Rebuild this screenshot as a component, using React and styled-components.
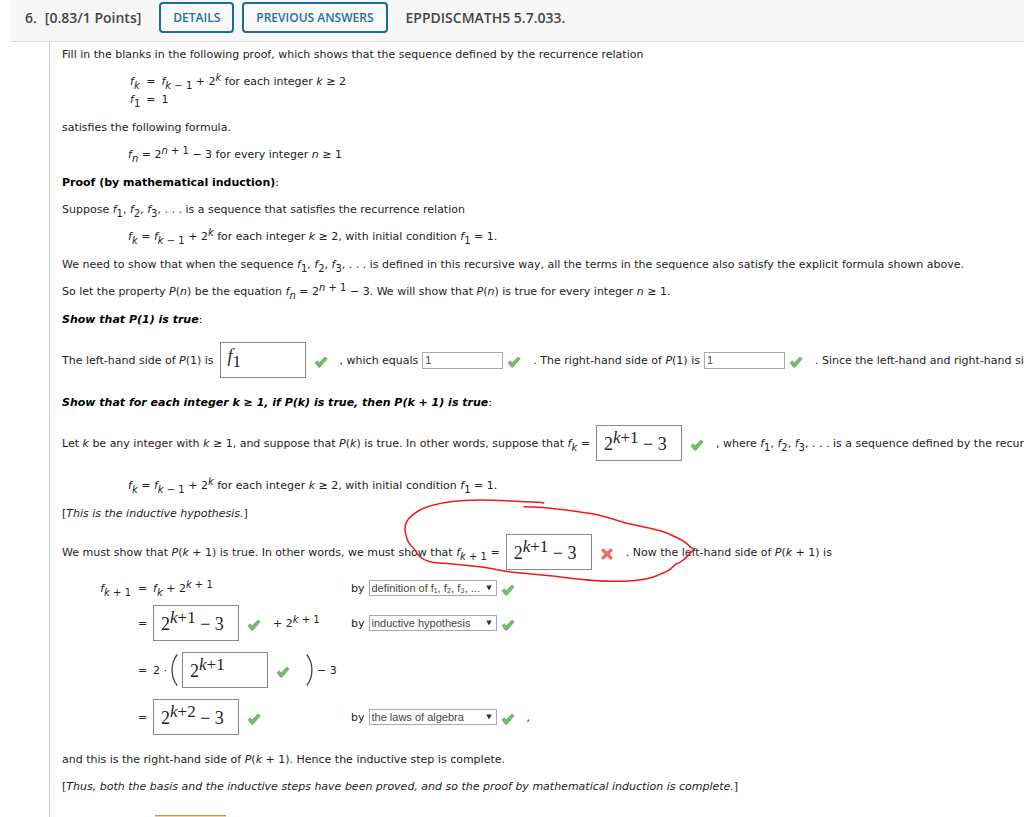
import * as React from "react";
import styled, { createGlobalStyle, css } from "styled-components";

const GlobalStyle = createGlobalStyle`
  * {
    box-sizing: border-box;
  }

  body {
    margin: 0;
    background-color: white;
    color: #222;
    font-family: "DejaVu Sans", Verdana, sans-serif;
    font-size: 11px;
    line-height: 17px;
  }
`;

const StyleQuestion = styled.main`
  padding-left: 11px;
  overflow: hidden;
`;

const StyleHeader = styled.header`
  display: flex;
  align-items: center;
  height: 42px;
  padding: 0 14px 7px;
  background-color: #f7f7f7;
  border-bottom: 1px solid #ddd;
  color: #444;
  font-family: "Open Sans", sans-serif;
  font-size: 14px;
  font-weight: 600;
  white-space: nowrap;

  h1,
  h2 {
    margin: 0;
    font-size: inherit;
    font-weight: inherit;
  }

  h2 {
    margin-left: 8px;
  }

  .code {
    margin-left: 18px;
  }
`;

const StyleHeaderButton = styled.button`
  height: 31px;
  margin-left: ${({ $first }) => ($first ? "18px" : "8px")};
  padding: 0 12px;
  background-color: #f9f9f9;
  border: 2px solid #1a6c9f;
  border-radius: 4px;
  color: #1f6fa3;
  font-family: inherit;
  font-size: 12px;
  font-weight: 600;
  cursor: pointer;
`;

const StyleBody = styled.section`
  display: flex;
  flex-flow: column nowrap;
  gap: 10px;
  margin-left: 38px;
  padding: 4px 0 0 12px;
  border-left: 1px solid #ccc;
  white-space: nowrap;

  sub,
  sup {
    font-size: 10px;
    line-height: 0;
  }

  sub {
    vertical-align: -4px;
  }

  sup {
    vertical-align: 4px;
  }
`;

const StyleLine = styled.p`
  margin: 0;
  line-height: ${({ $tall }) => ($tall ? "18px" : "17px")};
`;

const StyleFormula = styled.div`
  padding-left: 66px;
  line-height: 18px;
`;

const StyleDefinition = styled.div`
  display: grid;
  grid-template-columns: auto auto 1fr;
  column-gap: 6px;
  padding-left: 68px;
  line-height: 18px;
`;

const StyleHeading = styled.h3`
  margin: 0;
  color: #000;
  font-size: inherit;
  font-weight: 700;
  font-style: ${({ $italic }) => ($italic ? "italic" : "normal")};

  span {
    font-weight: 400;
    font-style: normal;
  }
`;

const StyleAnswerRow = styled.div`
  position: relative;
  display: flex;
  align-items: center;
  height: ${({ $dense }) => ($dense ? "40px" : "44px")};
  margin-bottom: ${({ $dense }) => ($dense ? "-10px" : "2px")};

  > * {
    flex: none;
  }
`;

const answerBorder = css`
  background-color: white;
  border: 1px solid #aaa;
  border-radius: 0;
  color: #444;
`;

const StyleMathBox = styled.div`
  ${answerBorder}
  flex: none;
  width: 86px;
  height: 36px;
  margin-left: ${({ $flush }) => ($flush ? "0" : "6px")};
  padding: 0 7px;
  border-color: #888;
  color: #222;
  font-family: "Liberation Serif", serif;
  font-size: 18px;
  line-height: ${({ $raised }) => ($raised ? "26px" : "36px")};

  sub,
  sup {
    font-size: 17px;
  }

  sup {
    vertical-align: 7px;
  }

  sub {
    vertical-align: -5px;
  }
`;

const StyleInput = styled.input`
  ${answerBorder}
  width: 81px;
  height: 17px;
  margin-left: 4px;
  padding: 0 2px;
  font-family: "Liberation Sans", Arial, sans-serif;
  font-size: 11px;
`;

const StyleMark = styled.svg`
  flex: none;
  width: 14px;
  height: 14px;
  margin: 4px 12px 0 ${({ $near }) => ($near ? "4px" : "8px")};
`;

const StyleSteps = styled.div`
  display: grid;
  grid-template-columns: 69px 22px 198px auto;
  grid-template-rows: 32px 38px 56px 38px;
  align-items: center;
  margin-bottom: 5px;

  .left {
    text-align: right;
  }

  .equals {
    padding-left: 7px;
  }
`;

const StyleExpression = styled.div`
  display: flex;
  align-items: center;
`;

const StyleReason = styled.div`
  display: flex;
  align-items: center;

  label {
    display: flex;
    align-items: center;
    gap: 4px;
  }
`;

const StyleSelect = styled.span`
  display: grid;
  align-items: center;
  width: 128px;

  select {
    ${answerBorder}
    grid-area: 1 / 1;
    width: 100%;
    height: 16px;
    padding: 0 14px 0 2px;
    appearance: none;
    font-family: "Liberation Sans", Arial, sans-serif;
    font-size: 11px;
  }

  svg {
    grid-area: 1 / 1;
    justify-self: end;
    margin-right: 5px;
    pointer-events: none;
  }
`;

const StyleParen = styled.svg`
  flex: none;
  width: 7px;
  height: 32px;
  margin: 0 4px;
`;

const StylePen = styled.svg`
  position: absolute;
  left: 338px;
  top: -37px;
  pointer-events: none;
`;

const StyleNextButton = styled.button`
  align-self: flex-start;
  width: 71px;
  height: 2px;
  margin: 10px 0 0 93px;
  padding: 0;
  background-color: #f3cf9f;
  border: 0;
  border-top: 1px solid #c98d55;
`;

function Check({ near }) {
  return (
    <StyleMark $near={near} viewBox="0 0 14 14" role="img" aria-label="Correct">
      <path
        d="M1 7.8 3 5.8 5.300 7.800 11 2 13.200 3.800 6 12.200 4.500 12.200Z"
        fill="#74bd6c"
        stroke="#5fab59"
        strokeWidth="0.7"
        strokeLinejoin="round"
      />
    </StyleMark>
  );
}

function Cross() {
  return (
    <StyleMark viewBox="0 0 14 14" role="img" aria-label="Incorrect">
      <path
        d="M3.2 1.6 7 5.1 10.8 1.6 12.6 3.4 9.1 7.1 12.6 10.9 10.8 12.6 7 9.1 3.2 12.6 1.4 10.9 4.9 7.1 1.4 3.4Z"
        fill="#f4696a"
        stroke="#ea5356"
        strokeWidth="0.6"
        strokeLinejoin="round"
      />
    </StyleMark>
  );
}

function Paren({ close }) {
  return (
    <StyleParen viewBox="0 0 7 32" aria-hidden="true">
      <path
        d={close ? "M0.8 0.5C7.6 9 7.6 23 0.8 31.5" : "M6.2 0.5C-0.6 9 -0.6 23 6.2 31.5"}
        fill="none"
        stroke="#444"
        strokeWidth="1.3"
      />
    </StyleParen>
  );
}

function PenCircle() {
  return (
    <StylePen width="300" height="90" viewBox="400 495 300 90" aria-hidden="true">
      <path
        d="M543.7 503C537 502 530 502 523 501.7C508 501 494 500 480 500C469 500 460 500.5 450 501.7C438 503.5 428 505.5 420 510C413 514 409 517 406.7 521.7C404.5 526 404.6 532 406.7 538C408 543 410 545 413.3 548C416 551 417 554 420 556.7C423 559.5 426 560.5 430 561.7C437 563.5 443 563 450 563.7L480 566.7C491 568 502 571 513 572.3L550 575.7C560 577 570 578.5 580 579.3C591 580.5 602 581.3 613 581.3C621 581.3 629 581.5 636.7 580.3C644 579.5 650 578.5 656.7 575.7C663 573 667 571.5 670 569.3L676 564C679 563 681 562 683.3 560C687 557 690 553 694 549.5L690 546.7C685 541 680 539 673.3 536C666 532 658 530 650 528.3L626.7 523.3C616 520 604 516 593.3 514C581 512.5 569 510 556.7 509C546 507.5 535 507 524 506.7"
        fill="none"
        stroke="#f01818"
        strokeWidth="1.5"
        strokeLinecap="round"
      />
    </StylePen>
  );
}

function MathBox({ label, flush, raised, children }) {
  return (
    <StyleMathBox
      role="textbox"
      aria-readonly="true"
      aria-label={label}
      $flush={flush}
      $raised={raised}
    >
      {children}
    </StyleMathBox>
  );
}

function Power({ add, rest }) {
  return (
    <>
      2<sup><i>k</i>+{add}</sup>
      {rest && <> − {rest}</>}
    </>
  );
}

function Reason({ value, after }) {
  return (
    <StyleReason>
      <label>
        by
        <StyleSelect>
          <select defaultValue={value}>
            <option>{value}</option>
          </select>
          <svg width="6" height="6" viewBox="0 0 6 6" aria-hidden="true">
            <path d="M0.3 0.5H5.7L3 5.5Z" fill="#333" />
          </svg>
        </StyleSelect>
      </label>
      <Check near />
      {after}
    </StyleReason>
  );
}

const FSequence = () => (
  <>
    <i>f</i><sub>1</sub>, <i>f</i><sub>2</sub>, <i>f</i><sub>3</sub>, . . .
  </>
);

const RecurrenceRight = () => (
  <>
    <i>f<sub>k</sub></i><sub> − 1</sub> + 2<sup><i>k</i></sup> for each integer <i>k</i> ≥ 2
  </>
);

const Recurrence = () => (
  <>
    <i>f<sub>k</sub></i> = <RecurrenceRight />
  </>
);

const Explicit = () => (
  <>
    <i>f<sub>n</sub></i> = 2<sup><i>n</i> + 1</sup> − 3
  </>
);

export default function App() {
  return (
    <StyleQuestion>
      <GlobalStyle />
      <StyleHeader>
        <h1>6.</h1>
        <h2>[0.83/1 Points]</h2>
        <StyleHeaderButton type="button" $first>DETAILS</StyleHeaderButton>
        <StyleHeaderButton type="button">PREVIOUS ANSWERS</StyleHeaderButton>
        <span className="code">EPPDISCMATH5 5.7.033.</span>
      </StyleHeader>

      <StyleBody>
        <StyleLine>
          Fill in the blanks in the following proof, which shows that the sequence defined by the
          recurrence relation
        </StyleLine>
        <StyleDefinition>
          <i>f<sub>k</sub></i>
          <span>=</span>
          <span><RecurrenceRight /></span>
          <span><i>f</i><sub>1</sub></span>
          <span>=</span>
          <span>1</span>
        </StyleDefinition>
        <StyleLine>satisfies the following formula.</StyleLine>
        <StyleFormula>
          <Explicit /> for every integer <i>n</i> ≥ 1
        </StyleFormula>
        <StyleHeading>Proof (by mathematical induction)<span>:</span></StyleHeading>
        <StyleLine>
          Suppose <FSequence /> is a sequence that satisfies the recurrence relation
        </StyleLine>
        <StyleFormula>
          <Recurrence />, with initial condition <i>f</i><sub>1</sub> = 1.
        </StyleFormula>
        <StyleLine>
          We need to show that when the sequence <FSequence /> is defined in this recursive way,
          all the terms in the sequence also satisfy the explicit formula shown above.
        </StyleLine>
        <StyleLine $tall>
          So let the property <i>P</i>(<i>n</i>) be the equation <Explicit />. We will show that{" "}
          <i>P</i>(<i>n</i>) is true for every integer <i>n</i> ≥ 1.
        </StyleLine>

        <StyleHeading $italic>Show that P(1) is true<span>:</span></StyleHeading>
        <StyleAnswerRow>
          <span>The left-hand side of <i>P</i>(1) is</span>
          <MathBox label="Left-hand side of P(1)" raised><i>f</i><sub>1</sub></MathBox>
          <Check />
          <span>, which equals</span>
          <StyleInput aria-label="Value of the left-hand side" defaultValue="1" />
          <Check near />
          <span>. The right-hand side of <i>P</i>(1) is</span>
          <StyleInput aria-label="Value of the right-hand side" defaultValue="1" />
          <Check near />
          <span>. Since the left-hand and right-hand sides</span>
        </StyleAnswerRow>

        <StyleHeading $italic>
          Show that for each integer k ≥ 1, if P(k) is true, then P(k + 1) is true<span>:</span>
        </StyleHeading>
        <StyleAnswerRow>
          <span>
            Let <i>k</i> be any integer with <i>k</i> ≥ 1, and suppose that <i>P</i>(<i>k</i>) is
            true. In other words, suppose that <i>f<sub>k</sub></i> =
          </span>
          <MathBox label="Inductive hypothesis"><Power add="1" rest="3" /></MathBox>
          <Check />
          <span>, where <FSequence /> is a sequence defined by the recurrence</span>
        </StyleAnswerRow>
        <StyleFormula>
          <Recurrence />, with initial condition <i>f</i><sub>1</sub> = 1.
        </StyleFormula>
        <StyleLine>[<i>This is the inductive hypothesis.</i>]</StyleLine>

        <StyleAnswerRow $dense>
          <span>
            We must show that <i>P</i>(<i>k</i> + 1) is true. In other words, we must show that{" "}
            <i>f<sub>k</sub></i><sub> + 1</sub> =
          </span>
          <MathBox label="Formula to show"><Power add="1" rest="3" /></MathBox>
          <Cross />
          <span>. Now the left-hand side of <i>P</i>(<i>k</i> + 1) is</span>
          <PenCircle />
        </StyleAnswerRow>

        <StyleSteps>
          <div className="left"><i>f<sub>k</sub></i><sub> + 1</sub></div>
          <div className="equals">=</div>
          <div><i>f<sub>k</sub></i> + 2<sup><i>k</i> + 1</sup></div>
          <Reason value="definition of f₁, f₂, f₃, ..." />

          <div />
          <div className="equals">=</div>
          <StyleExpression>
            <MathBox label="Step 2" flush><Power add="1" rest="3" /></MathBox>
            <Check />
            <span>+ 2<sup><i>k</i> + 1</sup></span>
          </StyleExpression>
          <Reason value="inductive hypothesis" />

          <div />
          <div className="equals">=</div>
          <StyleExpression>
            <span>2 ·</span>
            <Paren />
            <MathBox label="Step 3" flush><Power add="1" /></MathBox>
            <Check />
            <Paren close />
            <span>− 3</span>
          </StyleExpression>
          <div />

          <div />
          <div className="equals">=</div>
          <StyleExpression>
            <MathBox label="Step 4" flush><Power add="2" rest="3" /></MathBox>
            <Check />
          </StyleExpression>
          <Reason value="the laws of algebra" after="," />
        </StyleSteps>

        <StyleLine>
          and this is the right-hand side of <i>P</i>(<i>k</i> + 1). Hence the inductive step is
          complete.
        </StyleLine>
        <StyleLine>
          [<i>Thus, both the basis and the inductive steps have been proved, and so the proof by
          mathematical induction is complete.</i>]
        </StyleLine>
        <StyleNextButton type="button" aria-label="Continue" />
      </StyleBody>
    </StyleQuestion>
  );
}
